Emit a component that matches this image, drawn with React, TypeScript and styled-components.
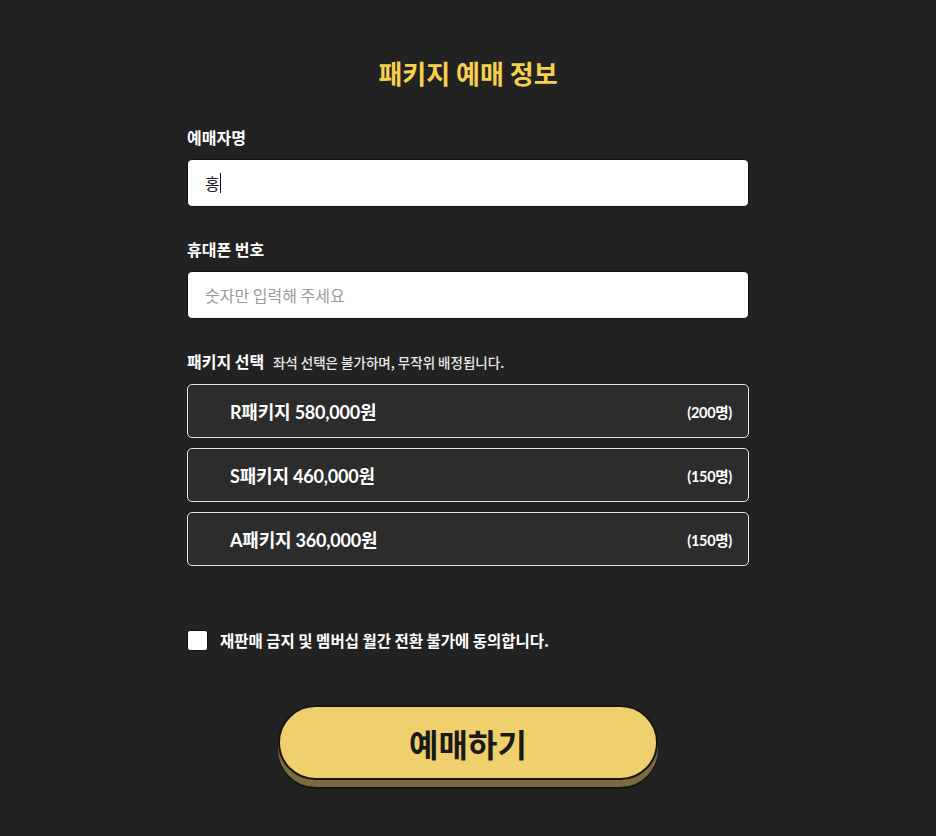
import styled, { createGlobalStyle } from 'styled-components';

const PACKAGES = [
  { id: 'R', name: 'R패키지 580,000원', seats: '(200명)' },
  { id: 'S', name: 'S패키지 460,000원', seats: '(150명)' },
  { id: 'A', name: 'A패키지 360,000원', seats: '(150명)' },
];

const GlobalStyle = createGlobalStyle`
  body {
    margin: 0;
    background: #222222;
    font-family: Lato, 'Noto Sans CJK KR', 'Noto Sans', sans-serif;
    color: #ffffff;
  }
`;

const App = () => {
  return (
    <>
      <GlobalStyle />
      <Page>
        <Title>패키지 예매 정보</Title>

        <Label>예매자명</Label>
        <Field>
          <FieldText>홍</FieldText>
          <Caret />
        </Field>

        <Label $gap={31}>휴대폰 번호</Label>
        <Input placeholder="숫자만 입력해 주세요" />

        <Label $gap={31}>
          패키지 선택 <Note>좌석 선택은 불가하며, 무작위 배정됩니다.</Note>
        </Label>
        <PackageList>
          {PACKAGES.map((item) => (
            <PackageCard key={item.id}>
              <PackageName>{item.name}</PackageName>
              <PackageSeats>{item.seats}</PackageSeats>
            </PackageCard>
          ))}
        </PackageList>

        <AgreeRow>
          <CheckBox />
          <AgreeText>재판매 금지 및 멤버십 월간 전환 불가에 동의합니다.</AgreeText>
        </AgreeRow>

        <SubmitButton type="button">예매하기</SubmitButton>
      </Page>
    </>
  );
};

const Page = styled.div`
  width: 562px;
  margin: 0 auto;
  padding: 55px 0 40px;
  display: flex;
  flex-direction: column;
`;

const Title = styled.h1`
  margin: 0;
  text-align: center;
  font-family: 'Noto Sans CJK KR', sans-serif;
  font-size: 26px;
  line-height: 36px;
  font-weight: 700;
  color: #f6d04d;
`;

const Label = styled.div<{ $gap?: number }>`
  margin-top: ${({ $gap }) => $gap ?? 35}px;
  margin-bottom: 11px;
  font-family: 'Noto Sans CJK KR', sans-serif;
  font-size: 16px;
  line-height: 22px;
  font-weight: 700;
  color: #ffffff;
`;

const Note = styled.span`
  margin-left: 5px;
  font-size: 13.5px;
  font-weight: 500;
  color: #e8e8e8;
`;

const fieldBox = `
  box-sizing: border-box;
  width: 100%;
  height: 48px;
  padding: 0 17px;
  background: #ffffff;
  border: 1px solid #111111;
  border-radius: 5px;
  font-family: 'Noto Sans CJK KR', sans-serif;
  font-size: 16px;
  color: #222222;
`;

const Field = styled.div`
  ${fieldBox}
  display: flex;
  align-items: center;
`;

const FieldText = styled.span`
  line-height: 20px;
`;

const Caret = styled.span`
  width: 1px;
  height: 20px;
  background: #111111;
`;

const Input = styled.input`
  ${fieldBox}
  outline: none;

  &::placeholder {
    color: #9a9a9a;
  }
`;

const PackageList = styled.div`
  display: flex;
  flex-direction: column;
  gap: 10px;
`;

const PackageCard = styled.div`
  box-sizing: border-box;
  height: 54px;
  padding: 0 16px 0 42px;
  display: flex;
  align-items: center;
  justify-content: space-between;
  background: #2c2c2c;
  border: 1px solid #e2e2e2;
  border-radius: 5px;
`;

const PackageName = styled.span`
  font-size: 18px;
  font-weight: 700;
  letter-spacing: -0.2px;
`;

const PackageSeats = styled.span`
  font-size: 14.5px;
  font-weight: 700;
  letter-spacing: -0.3px;
`;

const AgreeRow = styled.label`
  margin-top: 63px;
  display: flex;
  align-items: center;
  gap: 12px;
  height: 22px;
`;

const CheckBox = styled.span`
  box-sizing: border-box;
  width: 21px;
  height: 21px;
  background: #ffffff;
  border: 1px solid #111111;
  border-radius: 3px;
`;

const AgreeText = styled.span`
  font-family: 'Noto Sans CJK KR', sans-serif;
  font-size: 15.5px;
  font-weight: 700;
`;

const SubmitButton = styled.button`
  align-self: center;
  margin-top: 54px;
  width: 380px;
  height: 75px;
  border: 2px solid #161616;
  border-radius: 38px;
  background: #f0d06c;
  box-shadow: 0 7px 0 #7a6a3c, 0 9px 0 #141414;
  font-family: 'Noto Sans CJK KR', sans-serif;
  font-size: 32px;
  font-weight: 700;
  color: #1a1a1a;
  cursor: pointer;
`;

export default App;
